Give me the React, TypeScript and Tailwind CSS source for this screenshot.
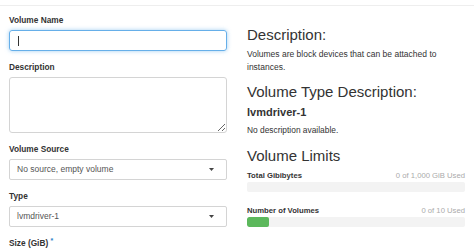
import React from 'react';

function Label({ children }: { children: React.ReactNode }) {
  return (
    <label className="block text-[8.3px] font-bold leading-[12px] text-[#333] mb-[4px]">
      {children}
    </label>
  );
}

function SelectBox({ value }: { value: string }) {
  return (
    <div className="h-[21px] w-full rounded-[2px] border border-[#d4d4d4] bg-white flex items-center justify-between pl-[7px] pr-[12px] text-[8.5px] text-[#555]">
      <span>{value}</span>
      <svg width="5" height="3" viewBox="0 0 5 3">
        <polygon points="0,0 5,0 2.5,3" fill="#444" />
      </svg>
    </div>
  );
}

function LimitBar({ label, used, percent }: { label: string; used: string; percent: number }) {
  return (
    <div>
      <div className="flex items-center justify-between text-[7.7px] leading-[11px]">
        <span className="font-bold text-[#333]">{label}</span>
        <span className="text-[#aaa]">{used}</span>
      </div>
      <div className="mt-[1.5px] h-[10px] w-full rounded-[2px] bg-[#f3f3f3] overflow-hidden">
        {percent > 0 && (
          <div className="h-full rounded-[2px] bg-[#5cb85c]" style={{ width: `${percent}%` }} />
        )}
      </div>
    </div>
  );
}

export default function App() {
  return (
    <div className="w-[474px] h-[248px] overflow-hidden bg-white font-['Liberation_Sans',Arial,sans-serif]">
      <div className="h-[5px]" />
      <div className="border-t border-[#eeeeee] flex pl-[9px]">
        <div className="w-[218px] pt-[8px]">
          <Label>Volume Name</Label>
          <div className="h-[21px] w-full rounded-[3px] border border-[#66afe9] shadow-[0_0_4px_rgba(102,175,233,0.6)] flex items-center pl-[8px] mb-[10px]">
            <span className="block w-[1px] h-[10px] bg-[#333]" />
          </div>

          <Label>Description</Label>
          <textarea className="block h-[56px] w-full rounded-[3px] border border-[#d4d4d4] mb-[10px] outline-none" />

          <Label>Volume Source</Label>
          <div className="mb-[10px]">
            <SelectBox value="No source, empty volume" />
          </div>

          <Label>Type</Label>
          <div className="mb-[10px]">
            <SelectBox value="lvmdriver-1" />
          </div>

          <Label>
            Size (GiB) <sup className="text-[#2a7fc9] text-[7px]">*</sup>
          </Label>
        </div>

        <div className="ml-[20px] w-[218px] pt-[20px] text-[#333]">
          <h3 className="text-[15px] leading-[18px]">Description:</h3>
          <p className="mt-[3.5px] text-[8.5px] leading-[13px]">
            Volumes are block devices that can be attached to instances.
          </p>

          <h3 className="mt-[9px] text-[15px] leading-[18px]">Volume Type Description:</h3>
          <h4 className="mt-[4px] text-[11px] font-bold leading-[14px]">lvmdriver-1</h4>
          <p className="mt-[5.5px] text-[8.4px] leading-[13px]">No description available.</p>

          <h3 className="mt-[10px] text-[15px] leading-[18px]">Volume Limits</h3>
          <div className="mt-[4.5px]">
            <LimitBar label="Total Gibibytes" used="0 of 1,000 GiB Used" percent={0} />
          </div>
          <div className="mt-[12.5px]">
            <LimitBar label="Number of Volumes" used="0 of 10 Used" percent={10} />
          </div>
        </div>
      </div>
    </div>
  );
}
